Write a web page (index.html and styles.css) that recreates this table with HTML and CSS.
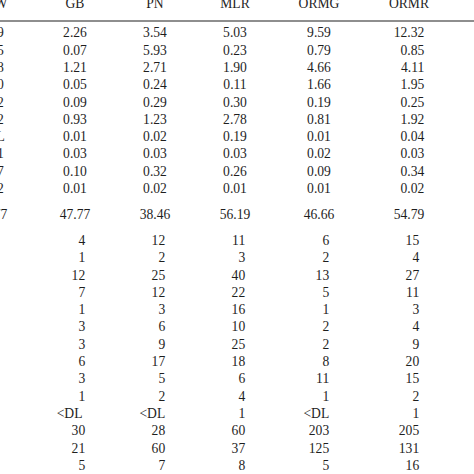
FILE: index.html
```html
<!DOCTYPE html>
<html lang="en">
<head>
<meta charset="utf-8">
<title>Table</title>
<link rel="stylesheet" href="styles.css">
</head>
<body>
<div class="table">
  <div class="row head">
    <div>RAW</div><div>GB</div><div>PN</div><div>MLR</div><div>ORMG</div><div class="dec">ORMR</div>
  </div>
  <div class="body">
    <div class="row"><div>3.49</div><div>2.26</div><div>3.54</div><div>5.03</div><div>9.59</div><div class="dec">12.32</div></div>
    <div class="row"><div>0.15</div><div>0.07</div><div>5.93</div><div>0.23</div><div>0.79</div><div class="dec">0.85</div></div>
    <div class="row"><div>2.38</div><div>1.21</div><div>2.71</div><div>1.90</div><div>4.66</div><div class="dec">4.11</div></div>
    <div class="row"><div>0.40</div><div>0.05</div><div>0.24</div><div>0.11</div><div>1.66</div><div class="dec">1.95</div></div>
    <div class="row"><div>0.12</div><div>0.09</div><div>0.29</div><div>0.30</div><div>0.19</div><div class="dec">0.25</div></div>
    <div class="row"><div>1.02</div><div>0.93</div><div>1.23</div><div>2.78</div><div>0.81</div><div class="dec">1.92</div></div>
    <div class="row"><div>&lt;DL</div><div>0.01</div><div>0.02</div><div>0.19</div><div>0.01</div><div class="dec">0.04</div></div>
    <div class="row"><div>0.01</div><div>0.03</div><div>0.03</div><div>0.03</div><div>0.02</div><div class="dec">0.03</div></div>
    <div class="row"><div>0.17</div><div>0.10</div><div>0.32</div><div>0.26</div><div>0.09</div><div class="dec">0.34</div></div>
    <div class="row"><div>0.02</div><div>0.01</div><div>0.02</div><div>0.01</div><div>0.01</div><div class="dec">0.02</div></div>
    <div class="row total"><div>48.77</div><div>47.77</div><div>38.46</div><div>56.19</div><div>46.66</div><div class="dec">54.79</div></div>
    <div class="row int"><div></div><div>4</div><div>12</div><div>11</div><div>6</div><div>15</div></div>
    <div class="row int"><div></div><div>1</div><div>2</div><div>3</div><div>2</div><div>4</div></div>
    <div class="row int"><div></div><div>12</div><div>25</div><div>40</div><div>13</div><div>27</div></div>
    <div class="row int"><div></div><div>7</div><div>12</div><div>22</div><div>5</div><div>11</div></div>
    <div class="row int"><div></div><div>1</div><div>3</div><div>16</div><div>1</div><div>3</div></div>
    <div class="row int"><div></div><div>3</div><div>6</div><div>10</div><div>2</div><div>4</div></div>
    <div class="row int"><div></div><div>3</div><div>9</div><div>25</div><div>2</div><div>9</div></div>
    <div class="row int"><div></div><div>6</div><div>17</div><div>18</div><div>8</div><div>20</div></div>
    <div class="row int"><div></div><div>3</div><div>5</div><div>6</div><div>11</div><div>15</div></div>
    <div class="row int"><div></div><div>1</div><div>2</div><div>4</div><div>1</div><div>2</div></div>
    <div class="row int"><div class="dl">&lt;DL</div><div class="dl">&lt;DL</div><div>&lt;DL</div><div>1</div><div>&lt;DL</div><div>1</div></div>
    <div class="row int"><div></div><div>30</div><div>28</div><div>60</div><div>203</div><div>205</div></div>
    <div class="row int"><div></div><div>21</div><div>60</div><div>37</div><div>125</div><div>131</div></div>
    <div class="row int"><div></div><div>5</div><div>7</div><div>8</div><div>5</div><div>16</div></div>
  </div>
</div>
</body>
</html>
```

FILE: styles.css
```css
html, body {
  margin: 0;
  padding: 0;
  background: #ffffff;
  overflow: hidden;
}

body {
  font-family: "Liberation Serif", "Times New Roman", serif;
  font-size: 13.6px;
  color: #1e1e1e;
}

.table {
  margin-top: -5.2px;
  margin-left: -51px;
}

.row {
  display: grid;
  grid-template-columns: 86px 80px 80px 80px 88px 92px;
  line-height: 17.3px;
  white-space: nowrap;
}

.row > div {
  text-align: center;
}

.row > .dec {
  text-align: right;
  padding-right: calc(50% - 15.3px);
}

.head {
  padding-bottom: 7.9px;
  border-bottom: 2px solid #8e8e8e;
}

.head > .dec {
  text-align: center;
  padding-right: 0;
}

.body {
  padding-top: 2.35px;
}

.total {
  padding: 8.7px 0;
}

.int > div {
  text-align: right;
  padding-right: calc(50% - 10.2px);
}

.int > .dl {
  padding-right: calc(50% - 7.5px);
}
```
